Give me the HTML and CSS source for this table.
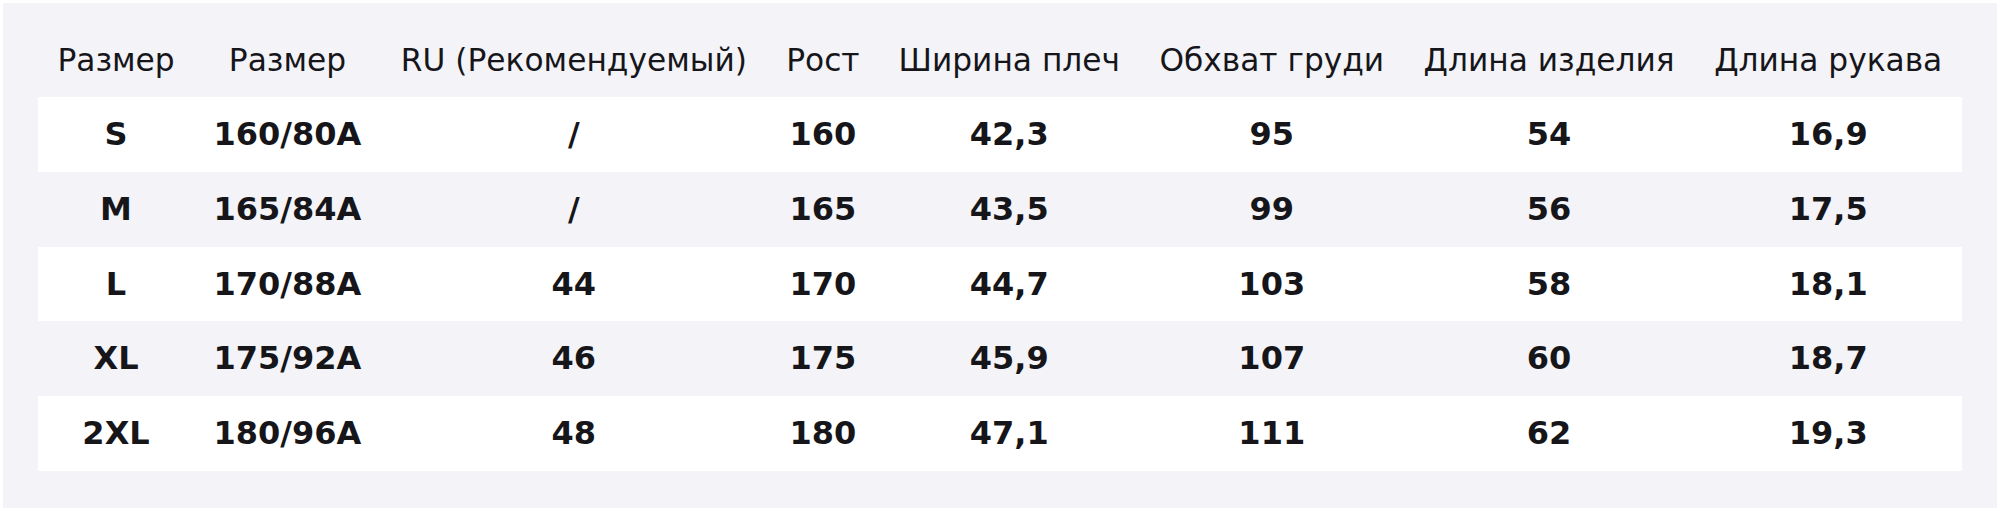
FILE: index.html
```html
<!DOCTYPE html>
<html lang="ru">
<head>
<meta charset="utf-8">
<title>Таблица размеров</title>
<link rel="stylesheet" href="styles.css">
</head>
<body>
<div class="size-chart">
  <table class="size-table">
    <thead>
      <tr>
        <th>Размер</th>
        <th>Размер</th>
        <th>RU (Рекомендуемый)</th>
        <th>Рост</th>
        <th>Ширина плеч</th>
        <th>Обхват груди</th>
        <th>Длина изделия</th>
        <th>Длина рукава</th>
      </tr>
    </thead>
    <tbody>
      <tr><td>S</td><td>160/80A</td><td>/</td><td>160</td><td>42,3</td><td>95</td><td>54</td><td>16,9</td></tr>
      <tr><td>M</td><td>165/84A</td><td>/</td><td>165</td><td>43,5</td><td>99</td><td>56</td><td>17,5</td></tr>
      <tr><td>L</td><td>170/88A</td><td>44</td><td>170</td><td>44,7</td><td>103</td><td>58</td><td>18,1</td></tr>
      <tr><td>XL</td><td>175/92A</td><td>46</td><td>175</td><td>45,9</td><td>107</td><td>60</td><td>18,7</td></tr>
      <tr><td>2XL</td><td>180/96A</td><td>48</td><td>180</td><td>47,1</td><td>111</td><td>62</td><td>19,3</td></tr>
    </tbody>
  </table>
</div>
</body>
</html>
```

FILE: styles.css
```css
html, body {
  margin: 0;
  padding: 0;
  background: #ffffff;
}

body {
  font-family: "DejaVu Sans", sans-serif;
  color: #16161a;
}

.size-chart {
  margin: 3px;
  padding: 35px 35px 37px;
  background: #f3f3f8;
}

.size-table {
  width: 100%;
  border-collapse: collapse;
  border-spacing: 0;
}

.size-table th {
  font-weight: 400;
  font-size: 31.25px;
  line-height: 44px;
  padding: 0 19px 15px;
  text-align: center;
  white-space: nowrap;
}

.size-table td {
  font-weight: 700;
  font-size: 32px;
  line-height: 44.8px;
  padding: 15px 19px;
  text-align: center;
  white-space: nowrap;
}

.size-table tbody tr:nth-child(odd) {
  background: #ffffff;
}
```
